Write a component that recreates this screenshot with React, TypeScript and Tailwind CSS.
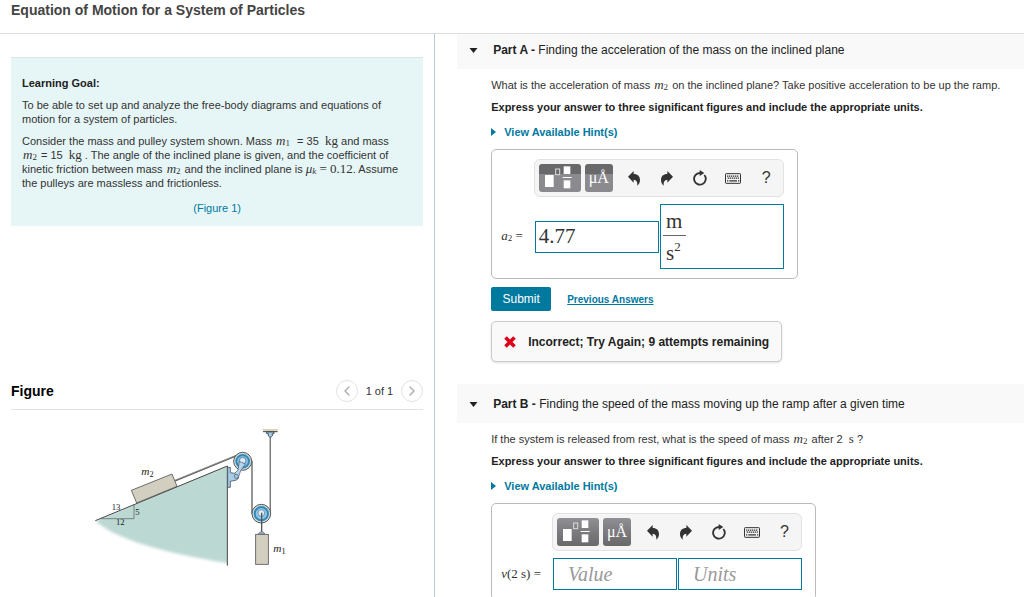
import { useState } from 'react';
import type { ReactNode } from 'react';
import { ChevronLeft, ChevronRight } from 'lucide-react';

const Sub = ({ children }: { children: ReactNode }) => (
  <sub className="static align-[-1px] text-[9px] leading-none not-italic">{children}</sub>
);

const M = ({ n }: { n: number }) => (
  <span className="mx-px font-['Liberation_Serif',serif] text-[13px] leading-none italic">
    m<Sub>{n}</Sub>
  </span>
);

const Serif = ({ children }: { children: ReactNode }) => (
  <span className="font-['Liberation_Serif',serif] text-[13px] leading-none">{children}</span>
);

const UndoIcon = ({ flip }: { flip?: boolean }) => (
  <svg viewBox="0 0 36 45" className={flip ? 'h-[15px] w-3 -scale-x-100' : 'h-[15px] w-3'} fill="#333">
    <path d="M0 17 L17 0 V9 C29 9 36 16 36 27 C36 35 33 40 28 44 C29 33 26 27 17 26 V35 Z" />
  </svg>
);

const ResetIcon = () => (
  <svg viewBox="0 0 42 48" className="h-4 w-[14px]" fill="none">
    <path d="M21 9 A17.5 17.5 0 1 0 34 15" stroke="#333" strokeWidth="5.5" />
    <path d="M20 0 L34 9 L20 18 Z" fill="#333" />
  </svg>
);

const KeyboardIcon = () => (
  <svg viewBox="0 0 48 32" className="h-[11px] w-4" fill="none" stroke="#333">
    <rect x="1.5" y="1.5" width="45" height="29" rx="2" strokeWidth="3" />
    <path d="M6 9 H42 M8 15 H42" strokeWidth="4" strokeDasharray="4 2" />
    <path d="M6 23 H10 M13 23 H36 M39 23 H43" strokeWidth="4" />
  </svg>
);

const TemplateIcon = () => (
  <svg viewBox="15 24 126 84" className="h-7 w-[42px]" fill="#fff">
    <rect x="33" y="57" width="26" height="36" />
    <rect x="65" y="39" width="12" height="17" fill="none" stroke="#ddd" strokeWidth="3" />
    <rect x="89" y="31" width="20" height="23" />
    <rect x="86" y="63" width="27" height="3" />
    <rect x="89" y="73" width="20" height="24" />
  </svg>
);

const iconButton = 'flex h-7 w-[33px] shrink-0 items-center justify-center text-[#333]';
const darkButton = 'flex h-7 shrink-0 items-center justify-center rounded-[3px] text-white';

const Toolbar = ({ split }: { split?: boolean }) => {
  const shade = split
    ? 'bg-linear-to-b from-[#69696b] from-35% to-[#8a8a8f] to-35%'
    : 'bg-linear-to-b from-[#8f8f94] to-[#69696b]';
  return (
    <div className="flex h-[38px] w-[250px] items-center rounded-md border border-[#e2e2e2] bg-[#f5f5f5] pl-1">
      <button aria-label="Templates" className={`${darkButton} ${shade} w-[42px]`}>
        <TemplateIcon />
      </button>
      <button aria-label="Symbols" className={`${darkButton} ${shade} mr-[5px] ml-1 w-7 font-['Liberation_Serif',serif] text-base`}>
        μÅ
      </button>
      <button aria-label="Undo" className={iconButton}><UndoIcon /></button>
      <button aria-label="Redo" className={iconButton}><UndoIcon flip /></button>
      <button aria-label="Reset" className={iconButton}><ResetIcon /></button>
      <button aria-label="Keyboard shortcuts" className={iconButton}><KeyboardIcon /></button>
      <button aria-label="Help" className={`${iconButton} text-base`}>?</button>
    </div>
  );
};

const field =
  "w-[124px] border border-[#00799f] bg-white font-['Liberation_Serif',serif] text-[#333] outline-none placeholder:text-[#999] placeholder:italic";

const PartHeader = ({ name, title, open, onToggle }: { name: string; title: string; open: boolean; onToggle: () => void }) => (
  <button
    onClick={onToggle}
    aria-expanded={open}
    className="flex w-full items-center bg-[#f9f9f9] pt-[11px] pb-[9px] pl-3 text-left text-xs leading-[19px] text-[#222]"
  >
    <svg viewBox="0 0 8 5" className="mr-[15px] h-[5px] w-[9px]" fill="#222"><path d="M0 0 H8 L4 5 Z" /></svg>
    <span><b>{name} -</b> {title}</span>
  </button>
);

const Prompt = ({ children }: { children: ReactNode }) => (
  <>
    <p className="mt-2 text-[11px] leading-4">{children}</p>
    <p className="mt-[6px] text-[11px] leading-4 font-bold text-[#222]">
      Express your answer to three significant figures and include the appropriate units.
    </p>
    <button className="mt-[9px] flex items-center text-[11px] leading-4 font-bold text-[#00799f]">
      <svg viewBox="0 0 5 8" className="mr-2 h-2 w-[5px]" fill="#00799f"><path d="M0 0 L5 4 L0 8 Z" /></svg>
      View Available Hint(s)
    </button>
  </>
);

const Figure = () => (
  <svg viewBox="0 0 660 480" className="ml-[69px] h-40 w-[220px]" role="img" aria-label="Mass and pulley system">
    <defs>
      <filter id="soft" x="-5%" y="-5%" width="110%" height="110%"><feGaussianBlur stdDeviation="4" /></filter>
      <clipPath id="ramp"><path d="M46 302 L442 138 V480 H0 V302 Z" /></clipPath>
    </defs>
    <g clipPath="url(#ramp)">
      <path d="M46 302 L442 130 H460 V432 C310 408 120 370 46 302 Z" fill="#bcd8d3" filter="url(#soft)" />
    </g>
    <path d="M46 302 L442 138 V437" fill="none" stroke="#444" strokeWidth="3" />
    <path d="M60 296 H162 V254" fill="none" stroke="#555" strokeWidth="2" />
    <path d="M154 211 L276 162 L291 199 L170 249 Z" fill="#d2cec0" stroke="#555" strokeWidth="2.5" />
    <path d="M285 182 L474 105" stroke="#555" strokeWidth="5" />
    <path d="M285 181 L474 104" stroke="#bbb" strokeWidth="1.5" />
    <path d="M516 122 V282 M571 50 V282" stroke="#555" strokeWidth="4" />
    <path d="M516 122 V282 M571 50 V282" stroke="#aaa" strokeWidth="1.5" />
    <path d="M443 142 H451 V158 L464 160 L476 171 L470 180 L451 184 V202 H443 Z" fill="#a9cbe4" stroke="#456" strokeWidth="2.5" />
    <circle cx="488" cy="124" r="27" fill="#d2dde2" stroke="#555" strokeWidth="3" />
    <circle cx="488" cy="124" r="19" fill="#8cc6e8" stroke="#3288b8" strokeWidth="6" />
    <circle cx="488" cy="122" r="10" fill="#d9ebf6" stroke="#456" strokeWidth="2" />
    <path d="M478 124 L474 150 L464 160 L474 176 L482 152 L496 132 Z" fill="#b5d5ea" stroke="#456" strokeWidth="2" />
    <circle cx="469" cy="169" r="6" fill="#a9cbe4" stroke="#456" strokeWidth="2" />
    <circle cx="544" cy="281" r="28" fill="#d2dde2" stroke="#555" strokeWidth="3" />
    <circle cx="544" cy="281" r="20" fill="#8cc6e8" stroke="#3288b8" strokeWidth="6" />
    <circle cx="544" cy="279" r="10" fill="#d9ebf6" stroke="#678" strokeWidth="2" />
    <path d="M545 278 V338" stroke="#555" strokeWidth="4" />
    <path d="M536 342 C538 333 552 333 554 342 Z" fill="#a9cbe4" stroke="#456" strokeWidth="2" />
    <rect x="527" y="343" width="38" height="90" fill="#d2cec0" stroke="#555" strokeWidth="2.5" />
    <path d="M546 27 H596 L588 35 H554 Z" fill="#d8d4be" />
    <path d="M549 35 H593" stroke="#444" strokeWidth="3" />
    <path d="M560 36 V41 H565 V48 C567 52 575 52 577 48 V41 H582 V36 Z" fill="#a9cbe4" stroke="#345" strokeWidth="2.5" />
    <g fontFamily="Liberation Serif, serif" fill="#222" fontSize="26">
      <text x="95" y="269">13</text>
      <text x="166" y="285">5</text>
      <text x="108" y="315">12</text>
      <text x="184" y="164" fontSize="34" fontStyle="italic">m<tspan fontSize="25" dy="7" fontStyle="normal">2</tspan></text>
      <text x="580" y="396" fontSize="34" fontStyle="italic">m<tspan fontSize="25" dy="7" fontStyle="normal">1</tspan></text>
    </g>
  </svg>
);

const pagerButton = 'flex size-[22px] items-center justify-center rounded-full border border-[#e3e3e3] text-[#aaa]';

export default function App() {
  const [valueA, setValueA] = useState('4.77');
  const [valueB, setValueB] = useState('');
  const [unitsB, setUnitsB] = useState('');
  const [openA, setOpenA] = useState(true);
  const [openB, setOpenB] = useState(true);

  return (
    <div className="flex h-screen flex-col bg-white font-['Liberation_Sans',Arial,sans-serif] text-[11px] text-[#333]">
      <header className="border-b border-[#ddd] px-[11px] pb-3">
        <h1 className="text-sm leading-[21px] font-bold text-[#444]">Equation of Motion for a System of Particles</h1>
      </header>

      <main className="grid min-h-0 flex-1 grid-cols-[17fr_23fr]">
        <div className="flex min-h-0 flex-col border-r border-[#b8c9d9] pr-[11px] pl-[11px]">
          <section className="mt-[23px] border-t border-[#d9e6e8] bg-[#e6f6f7] px-[11px] pt-[18px] pb-[11px] leading-[14px]">
            <h2 className="font-bold text-[#222]">Learning Goal:</h2>
            <p className="mt-2">
              To be able to set up and analyze the free-body diagrams and equations of motion for a system of particles.
            </p>
            <p className="mt-2">
              Consider the mass and pulley system shown. Mass <M n={1} /> &nbsp;= 35 &nbsp;<Serif>kg</Serif> and mass{' '}
              <span className="whitespace-nowrap"><M n={2} /> = 15 &nbsp;<Serif>kg</Serif></span> . The angle of the inclined plane
              is given, and the coefficient of kinetic friction between mass <M n={2} /> and the inclined plane is{' '}
              <Serif><i>μ<Sub><i>k</i></Sub></i> = 0.12</Serif>. Assume the pulleys are massless and frictionless.
            </p>
            <p className="mt-[11px] text-center">
              <a href="#figure" className="text-[#00799f]">(Figure 1)</a>
            </p>
          </section>

          <section id="figure" className="mt-auto pb-[17px]">
            <div className="mb-[10px] flex items-center border-b border-[#e3e3e3] pb-[7px]">
              <h2 className="flex-1 text-sm font-bold text-black">Figure</h2>
              <button aria-label="Previous figure" className={pagerButton}><ChevronLeft size={16} /></button>
              <span className="mx-2">1 of 1</span>
              <button aria-label="Next figure" className={pagerButton}><ChevronRight size={16} /></button>
            </div>
            <Figure />
          </section>
        </div>

        <div className="ml-[22px] min-h-0 overflow-y-auto [scrollbar-width:none]">
          <section className="-mt-1">
            <PartHeader
              name="Part A"
              title="Finding the acceleration of the mass on the inclined plane"
              open={openA}
              onToggle={() => setOpenA(!openA)}
            />
            {openA && (
              <div className="pl-[34px]">
                <Prompt>
                  What is the acceleration of mass <M n={2} /> on the inclined plane? Take positive acceleration to be up the ramp.
                </Prompt>
                <div className="mt-[9px] flex w-fit flex-col items-end rounded-[5px] border border-[#bbb] py-[9px] pr-[13px] pl-[9px]">
                  <Toolbar split />
                  <div className="mt-[7px] flex items-center">
                    <label htmlFor="a-value" className="mr-3"><Serif><i>a</i><Sub>2</Sub> =</Serif></label>
                    <input id="a-value" value={valueA} onChange={(e) => setValueA(e.target.value)} className={`${field} h-8 px-[3px] text-[21px]`} />
                    <div
                      role="textbox"
                      aria-label="Units"
                      contentEditable
                      suppressContentEditableWarning
                      className={`${field} ml-px h-[65px] px-[2px] pt-[3px] text-[21px] leading-[27px]`}
                    >
                      <span className="inline-flex w-[23px] flex-col text-center">
                        <span className="border-b border-[#666]">m</span>
                        <span className="pt-1 pr-[2px]">s<sup className="-top-[9px] text-[13px] leading-none">2</sup></span>
                      </span>
                    </div>
                  </div>
                </div>
                <div className="mt-2 flex items-center gap-4">
                  <button className="h-6 w-[60px] rounded-[2px] bg-[#00799f] text-xs text-white">Submit</button>
                  <a href="#previous" className="text-[10px] font-bold text-[#00799f] underline">Previous Answers</a>
                </div>
                <div className="mt-[10px] flex h-[41px] w-fit items-center rounded-[5px] border border-[#ccc] bg-[#f9f9f9] px-3 text-xs font-bold text-[#222] shadow-sm">
                  <svg viewBox="0 0 12 12" className="mr-3 size-3" stroke="#e0001b" strokeWidth="3.6">
                    <path d="M1.5 1.5 L10.5 10.5 M10.5 1.5 L1.5 10.5" />
                  </svg>
                  Incorrect; Try Again; 9 attempts remaining
                </div>
              </div>
            )}
          </section>

          <section className="mt-[22px]">
            <PartHeader
              name="Part B"
              title="Finding the speed of the mass moving up the ramp after a given time"
              open={openB}
              onToggle={() => setOpenB(!openB)}
            />
            {openB && (
              <div className="pl-[34px]">
                <Prompt>
                  If the system is released from rest, what is the speed of mass <M n={2} /> after 2 &nbsp;<Serif>s</Serif> ?
                </Prompt>
                <div className="mt-[9px] flex w-fit flex-col items-end rounded-[5px] border border-[#bbb] py-[9px] pr-[13px] pl-[9px]">
                  <Toolbar />
                  <div className="mt-[7px] flex items-center">
                    <label htmlFor="b-value" className="mr-3"><Serif><i>v</i>(2 s) =</Serif></label>
                    <input
                      id="b-value"
                      placeholder="Value"
                      value={valueB}
                      onChange={(e) => setValueB(e.target.value)}
                      className={`${field} h-8 px-[14px] text-[20px]`}
                    />
                    <input
                      aria-label="Units"
                      placeholder="Units"
                      value={unitsB}
                      onChange={(e) => setUnitsB(e.target.value)}
                      className={`${field} ml-px h-8 px-[14px] text-[20px]`}
                    />
                  </div>
                </div>
              </div>
            )}
          </section>
        </div>
      </main>
    </div>
  );
}
